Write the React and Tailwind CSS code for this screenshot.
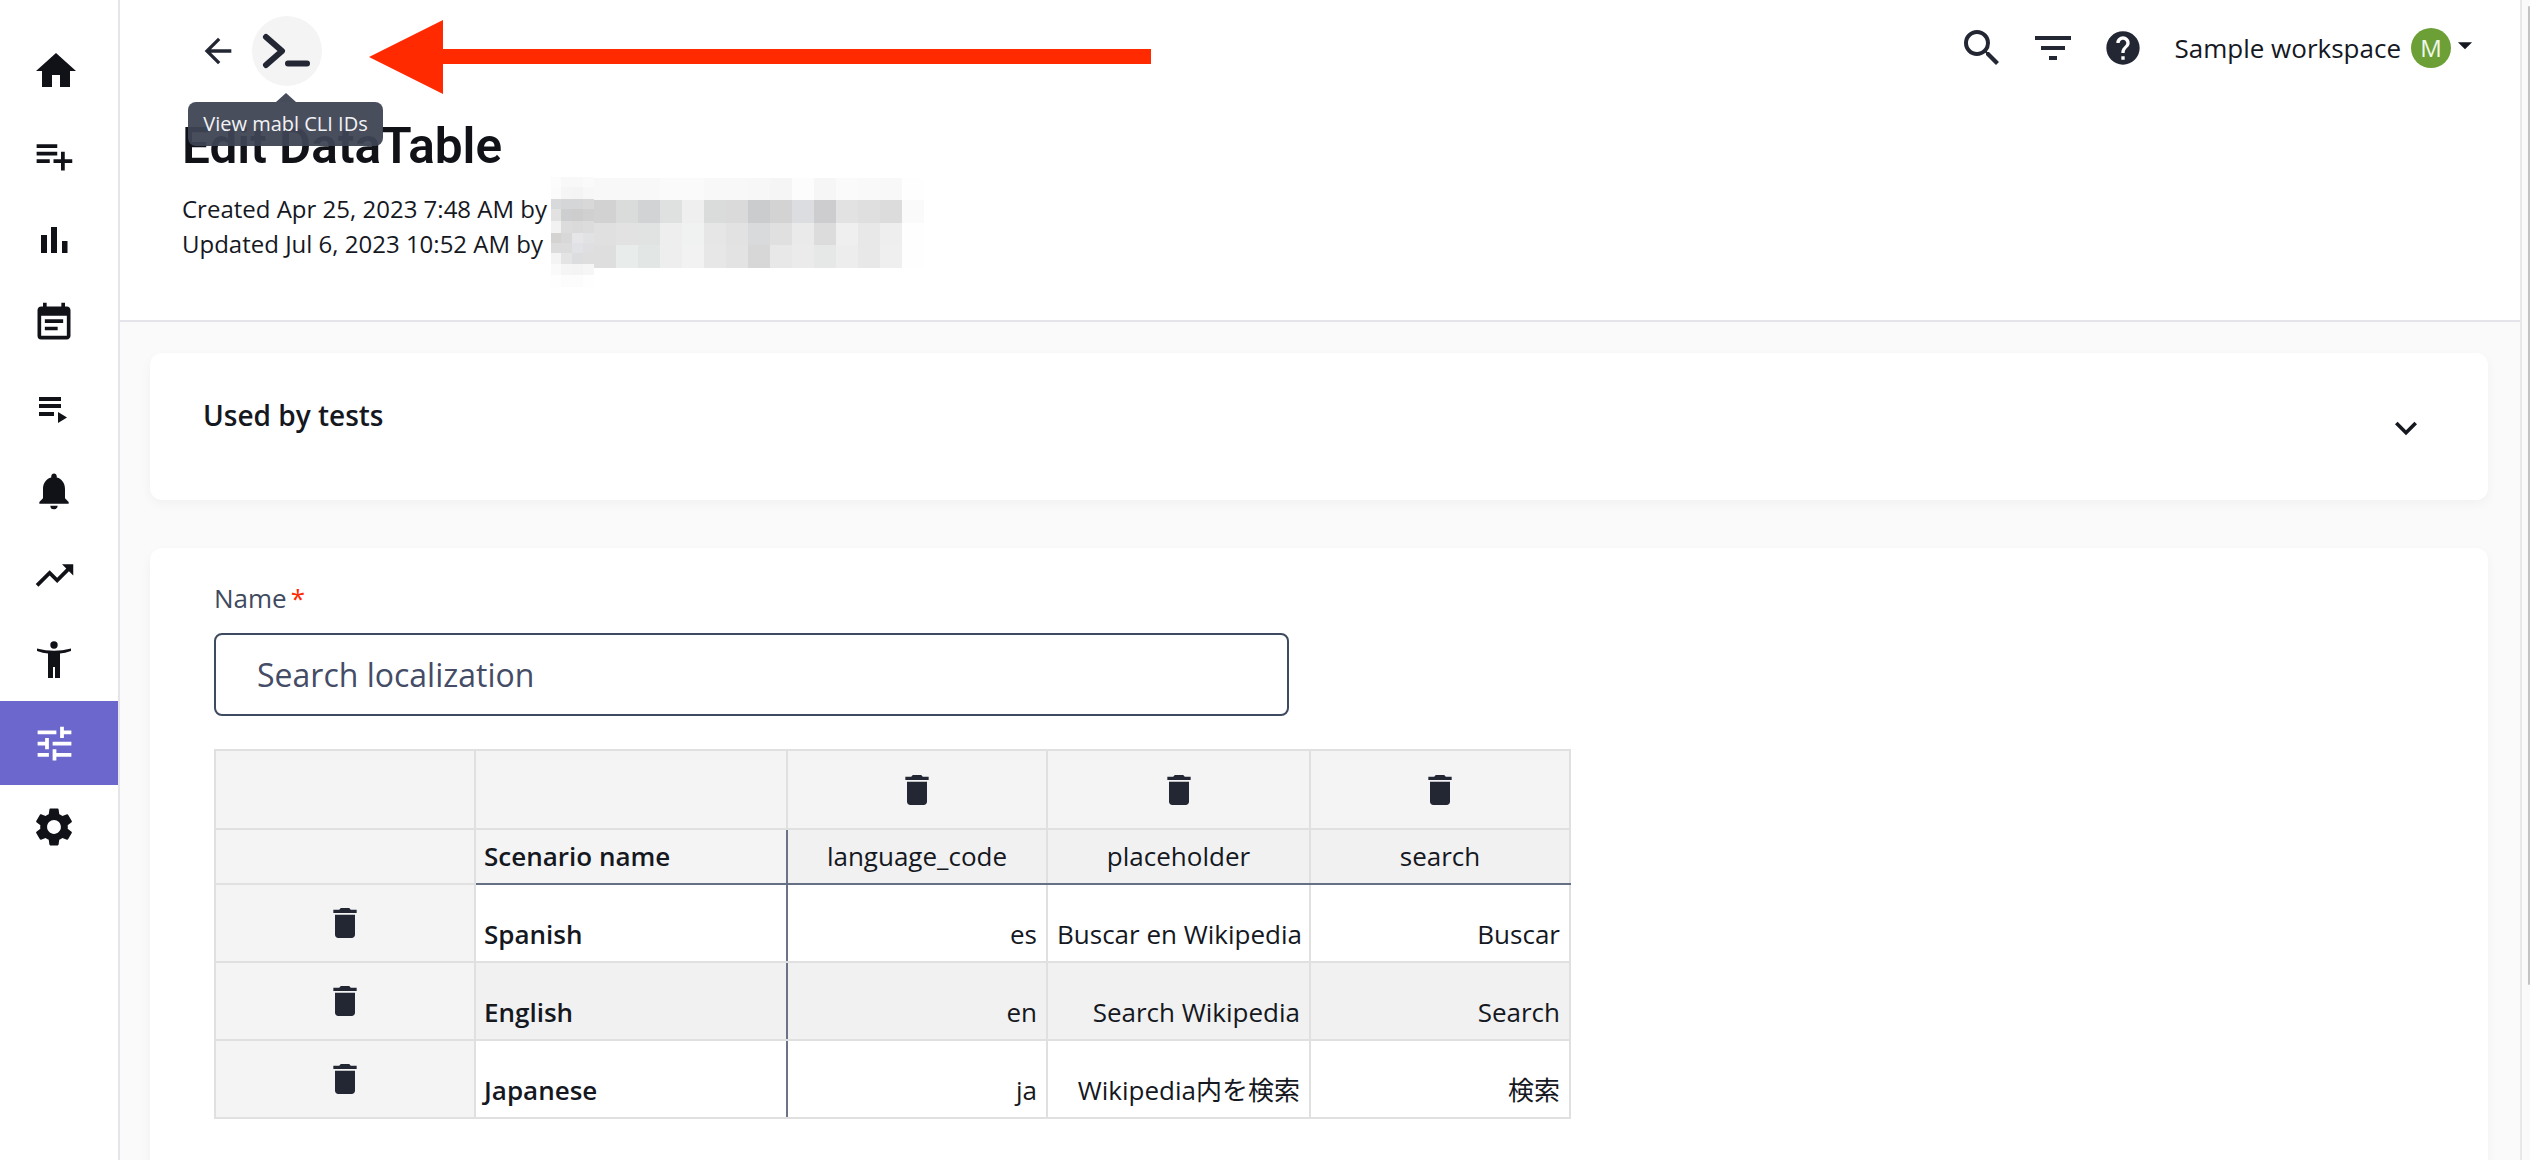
import React from 'react';
import {
  MdHome, MdPlaylistAdd, MdEventNote, MdNotifications,
  MdTrendingUp, MdTune, MdSettings, MdArrowBack, MdSearch,
  MdFilterList, MdHelp, MdArrowDropDown, MdKeyboardArrowDown, MdDelete,
} from 'react-icons/md';

const BarsIcon = () => (
  <svg width="48" height="48" viewBox="0 0 48 48" fill="currentColor">
    <rect x="11" y="20" width="6" height="18" />
    <rect x="21" y="12" width="6" height="26" />
    <rect x="32" y="26" width="5.500" height="12" />
  </svg>
);

const QueueIcon = () => (
  <svg width="48" height="48" viewBox="0 0 48 48" fill="currentColor">
    <rect x="9" y="14" width="22" height="4" />
    <rect x="9" y="21" width="22" height="4" />
    <rect x="9" y="29" width="15" height="4" />
    <path d="M28 29 L37 34.500 L28 40 Z" />
  </svg>
);

const PersonIcon = () => (
  <svg width="48" height="48" viewBox="0 0 48 48" fill="currentColor">
    <circle cx="24" cy="10" r="3.700" />
    <path d="M7 13.500 Q24 18 41 13.500 L41 16 Q35 18 30 18.500 V43 H25 V32 H23 V43 H18 V18.500 Q13 18 7 16 Z" />
  </svg>
);

const navItems = [
  { icon: <MdHome size={48} className="ml-[2px]" /> },
  { icon: <MdPlaylistAdd size={45} className="ml-[1px]" /> },
  { icon: <BarsIcon /> },
  { icon: <MdEventNote size={44} className="ml-[2px]" /> },
  { icon: <QueueIcon /> },
  { icon: <MdNotifications size={44} className="ml-[2px]" /> },
  { icon: <MdTrendingUp size={45} className="ml-[2px]" /> },
  { icon: <PersonIcon /> },
  { icon: <MdTune size={45} className="ml-[2px]" />, active: true },
  { icon: <MdSettings size={46} className="ml-[1px]" /> },
];

const rows = [
  { name: 'Spanish', code: 'es', placeholder: 'Buscar en Wikipedia', search: 'Buscar' },
  { name: 'English', code: 'en', placeholder: 'Search Wikipedia', search: 'Search', shaded: true },
  { name: 'Japanese', code: 'ja', placeholder: 'Wikipedia内を検索', search: '検索' },
];

// the redacted user names after "by"
const blurMain = [
  ['#f8f8f8', '#f8f8f8', '#f8f8f8', '#fafafa', '#fafafa', '#f8f8f8', '#f8f8f8', '#f7f7f7', '#f5f5f5', '#fcfcfc', '#f6f6f6', '#fafafa', '#f9f9f9', '#f8f8f8', '#fefefe'],
  ['#d2d2d2', '#dadcdb', '#d2d3d5', '#dfe1e0', '#efefef', '#dadcdb', '#dadada', '#cbcccd', '#d3d3d3', '#dcdde0', '#cdcdcf', '#e2e2e2', '#dfdfdf', '#dcdcdc', '#fafafa'],
  ['#e0e0e0', '#e2e2e2', '#e1e3e2', '#eeeeee', '#f0f2f1', '#e6e6e6', '#e2e2e2', '#d9dadc', '#e0e0e0', '#eaeaea', '#dcdcdc', '#efefef', '#e8e8e8', '#eeeeee', '#fefefe'],
  ['#dedede', '#e8ecea', '#e2e6e4', '#eeeeee', '#f2f2f2', '#e7e7e7', '#e3e3e3', '#d7d7d7', '#e8e8e8', '#ebebeb', '#e6e8e7', '#ededed', '#e8e8e8', '#efefef', '#fefefe'],
];
const blurLeft = [
  [177, 10, ['#fcfcfc', '#f8f8f8', '#f8f8f8', '#fafafa']],
  [187, 12, ['#fbfbfb', '#f5f5f5', '#f4f4f4', '#f7f7f7']],
  [199, 10, ['#d8d9db', '#d4d6d7', '#d4d6d7', '#d8d8d8']],
  [209, 12, ['#e2e2e2', '#cdcecf', '#cdcdcd', '#d0d0d0']],
  [221, 12, ['#f2f2f2', '#dcdcdc', '#dadada', '#dcdcdc']],
  [233, 10, ['#d4d3d1', '#d8d8d8', '#e6e6e8', '#e0e2e4']],
  [243, 10, ['#dcdcdc', '#dcdcdc', '#e0e2e5', '#dfdfe2']],
  [253, 11, ['#f4f4f4', '#e4e4e4', '#dcdddf', '#dedede']],
  [264, 11, ['#fafafa', '#f5f5f5', '#f4f4f4', '#f6f6f6']],
  [275, 12, ['#fefefe', '#fcfcfc', '#fcfcfc', '#fefefe']],
];

const Redaction = () => (
  <svg className="absolute left-[548px] top-[170px]" width="390" height="125" viewBox="548 170 390 125" shapeRendering="crispEdges">
    {blurMain.map((r, y) =>
      r.map((c, x) => <rect key={`${y}-${x}`} x={594 + x * 22} y={178 + y * 22.4} width="22" height="22.4" fill={c} />)
    )}
    {blurLeft.map(([y, h, cols]) =>
      cols.map((c, x) => <rect key={`${y}-${x}`} x={[551, 561, 572, 583][x]} y={y} width={[10, 11, 11, 11][x]} height={h} fill={c} />)
    )}
  </svg>
);

const RedArrow = () => (
  <svg className="absolute left-[369px] top-[20px]" width="782" height="74" viewBox="0 0 782 74">
    <path d="M0 37 L74 0 V29 H782 V44 H74 V74 Z" fill="#ff2a00" />
  </svg>
);

const Tooltip = () => (
  <div className="absolute left-[188px] top-[93px] flex w-[195px] flex-col items-center">
    <div className="h-0 w-0 border-x-[10px] border-b-[9px] border-x-transparent border-b-[#474c5b]" />
    <div className="flex h-[44px] w-full items-center justify-center rounded-lg bg-[#3f4454]/95 text-[20px] text-[#f2f3f5]">
      View mabl CLI IDs
    </div>
  </div>
);

const Sidebar = () => (
  <aside className="w-[120px] shrink-0 border-r-2 border-[#e4e4ea] bg-white pt-[29px]">
    {navItems.map(({ icon, active }, i) => (
      <div key={i} className={`flex h-[84px] items-center pl-[30px] ${active ? 'bg-[#6b67cc] text-white' : 'text-[#101218]'}`}>
        {icon}
      </div>
    ))}
  </aside>
);

const TopBar = () => (
  <div className="flex items-start justify-between pl-[78px] pr-[38px] pt-4">
    <div className="flex items-center gap-[14px]">
      <MdArrowBack size={40} className="text-[#232733]" />
      <div className="flex h-[70px] w-[70px] items-center justify-center rounded-full bg-[#f4f4f4]">
        <svg width="70" height="70" viewBox="0 0 70 70" fill="none" stroke="#232733" strokeWidth="6" strokeLinecap="round" strokeLinejoin="round">
          <path d="M14 21 L30 35 L14 49" />
          <path d="M36 47.500 H55" />
        </svg>
      </div>
    </div>
    <div className="mt-2 flex h-[48px] items-center text-[#232733]">
      <MdSearch size={48} />
      <MdFilterList size={48} className="ml-[23px]" />
      <MdHelp size={40} className="ml-[26px]" />
      <span className="ml-[32px] text-[26px] text-[#15181f]">Sample workspace</span>
      <div className="ml-[10px] flex h-10 w-10 items-center justify-center rounded-full bg-[#6ca036] text-[24px] text-[#f1f6ea]">M</div>
      <MdArrowDropDown size={34} className="mb-[6px] ml-[-3px] text-[#15181f]" />
    </div>
  </div>
);

const Trash = () => <MdDelete size={40} className="mx-auto text-[#232733]" />;

const headCell = 'border-2 border-[#e0e0e0] bg-[#f4f4f4] p-0';
const columnCell = 'border-2 border-[#e0e0e0] bg-[#f1f1f1] p-0 text-center font-normal';
const valueCell = 'whitespace-nowrap border-2 border-[#e0e0e0] px-[9px] pb-[7px] text-right align-bottom';

const DataTable = () => (
  <table className="w-[1355px] table-fixed border-collapse text-[26px] text-[#15181f]">
    <colgroup>
      <col className="w-[260px]" />
      <col className="w-[312px]" />
      <col className="w-[260px]" />
      <col className="w-[263px]" />
      <col className="w-[260px]" />
    </colgroup>
    <thead>
      <tr className="h-[79px]">
        <th className={headCell} />
        <th className={headCell} />
        <th className={headCell}><Trash /></th>
        <th className={headCell}><Trash /></th>
        <th className={headCell}><Trash /></th>
      </tr>
      <tr className="h-[55px]">
        <th className={`${headCell} border-b-[#e0e0e0]`} />
        <th className="border-2 border-[#e0e0e0] border-b-[#667085] border-r-[#6b7486] bg-[#f4f4f4] px-[8px] text-left font-semibold">Scenario name</th>
        <th className={`${columnCell} border-b-[#667085]`}>language_code</th>
        <th className={`${columnCell} border-b-[#667085]`}>placeholder</th>
        <th className={`${columnCell} border-b-[#667085]`}>search</th>
      </tr>
    </thead>
    <tbody>
      {rows.map((row) => {
        const bg = row.shaded ? 'bg-[#f1f1f1]' : 'bg-white';
        return (
          <tr key={row.name} className="h-[78px]">
            <td className="border-2 border-[#e0e0e0] bg-[#f4f4f4] p-0"><Trash /></td>
            <td className={`border-2 border-[#e0e0e0] border-r-[#6b7486] px-[8px] pb-[7px] align-bottom font-semibold ${bg}`}>{row.name}</td>
            <td className={`${valueCell} ${bg}`}>{row.code}</td>
            <td className={`${valueCell} ${bg}`}>{row.placeholder}</td>
            <td className={`${valueCell} ${bg}`}>{row.search}</td>
          </tr>
        );
      })}
    </tbody>
  </table>
);

export default function App() {
  return (
    <div className="relative flex h-[1160px] w-[2530px] overflow-hidden bg-white font-['Open_Sans','Noto_Sans_CJK_JP',sans-serif]">
      <Sidebar />
      <main className="flex min-w-0 flex-1 flex-col">
        <header className="h-[322px] shrink-0 border-b-2 border-[#e4e4ea] bg-white">
          <TopBar />
          <div className="pl-[62px] pt-[27px]">
            <h1 className="font-['Roboto',sans-serif] text-[49.500px] font-semibold leading-[66px] text-[#101218]">Edit DataTable</h1>
            <div className="mt-[12px] text-[24px] leading-[35px] text-[#15181f]">
              <p>Created Apr 25, 2023 7:48 AM by</p>
              <p>Updated Jul 6, 2023 10:52 AM by</p>
            </div>
          </div>
        </header>
        <div className="flex flex-1 flex-col gap-12 bg-[#fafafa] pl-[30px] pr-[32px] pt-[31px]">
          <section className="flex h-[147px] shrink-0 justify-between rounded-xl bg-white pl-[53px] pr-[60px] shadow-[0_4px_12px_rgba(0,0,0,0.04)]">
            <h2 className="pt-[44px] text-[28px] font-semibold leading-[36px] text-[#15181f]">Used by tests</h2>
            <MdKeyboardArrowDown size={44} className="mt-[53px] text-[#15181f]" />
          </section>
          <section className="shrink-0 rounded-xl bg-white pb-20 pl-[64px] pt-[32px] shadow-[0_4px_12px_rgba(0,0,0,0.04)]">
            <label className="block text-[26px] font-medium leading-[36px] text-[#3f4a5e]">
              Name<span className="ml-[4px] text-[#ff2a00]">*</span>
            </label>
            <input
              readOnly
              value="Search localization"
              className="mt-[17px] block h-[83px] w-[1075px] rounded-lg border-2 border-[#3e4a60] bg-white pl-[41px] text-[32px] text-[#444c66] outline-none"
            />
            <div className="mt-[33px]">
              <DataTable />
            </div>
          </section>
        </div>
      </main>
      <div className="relative w-[10px] shrink-0 border-l-2 border-[#e8e8e8] bg-[#fafafa]">
        <div className="absolute bottom-[175px] right-0 top-[6px] w-[2px] rounded-sm bg-[#c4c4c4]" />
      </div>
      <Redaction />
      <RedArrow />
      <Tooltip />
    </div>
  );
}
